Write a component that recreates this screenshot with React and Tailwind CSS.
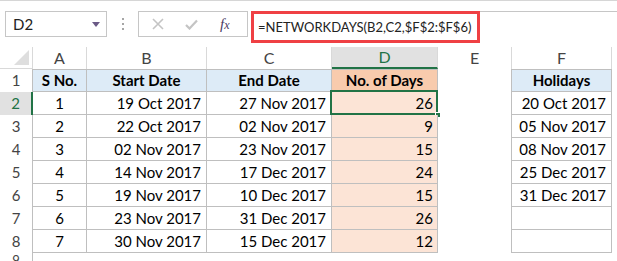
const rows = [
  ['1', '19 Oct 2017', '27 Nov 2017', '26', '20 Oct 2017'],
  ['2', '22 Oct 2017', '02 Nov 2017', '9', '05 Nov 2017'],
  ['3', '02 Nov 2017', '23 Nov 2017', '15', '08 Nov 2017'],
  ['4', '14 Nov 2017', '17 Dec 2017', '24', '25 Dec 2017'],
  ['5', '19 Nov 2017', '10 Dec 2017', '15', '31 Dec 2017'],
  ['6', '23 Nov 2017', '31 Dec 2017', '26', ''],
  ['7', '30 Nov 2017', '15 Dec 2017', '12', ''],
];

const cols = ['A', 'B', 'C', 'D', 'E', 'F'];

function FormulaBar() {
  return (
    <div className="h-[47px] border-t border-[#d6d6d6] flex items-start pt-[10px] relative">
      {/* Name box */}
      <div className="ml-[5px] w-[102px] h-[26px] border border-[#c6c6c6] flex items-center justify-between pl-[7px] pr-[6px]">
        <span className="text-[15px] text-[#222]">D2</span>
        <span className="w-0 h-0 border-l-[4px] border-r-[4px] border-t-[5px] border-l-transparent border-r-transparent border-t-[#6b5a86]" />
      </div>
      {/* Dots */}
      <div className="w-[31px] h-[26px] flex flex-col items-center justify-center gap-[3px]">
        <span className="w-[2px] h-[2px] bg-[#a6a6a6]" />
        <span className="w-[2px] h-[2px] bg-[#a6a6a6]" />
        <span className="w-[2px] h-[2px] bg-[#a6a6a6]" />
      </div>
      {/* Cancel / enter / fx */}
      <div className="w-[110px] h-[26px] border border-[#c6c6c6] flex items-center pl-[13px]">
        <svg width="12" height="12" viewBox="0 0 12 12" className="mr-[21px]">
          <path d="M1 1L11 11M11 1L1 11" stroke="#c4c4c4" strokeWidth="1.6" />
        </svg>
        <svg width="13" height="11" viewBox="0 0 13 11" className="mr-[22px]">
          <path d="M1 6L4.5 9.5L12 1.5" stroke="#c4c4c4" strokeWidth="2.2" fill="none" />
        </svg>
        <span className="text-[15px] italic text-[#4b3c63] [font-family:'Liberation_Serif',serif]">
          f<span className="text-[12px]">x</span>
        </span>
      </div>
      {/* Formula */}
      <div className="ml-[4px] flex-1 h-[26px] border-t border-[#c6c6c6] relative">
        <div className="absolute left-[-1px] top-[-1px] w-[229px] h-[32px] border-[3px] border-[#ef4044] flex items-start pl-[4px] pt-[4px]">
          <span className="text-[13px] text-[#222] whitespace-nowrap">
            =NETWORKDAYS(B2,C2,$F$2:$F$6)
          </span>
        </div>
      </div>
    </div>
  );
}

function Grid() {
  const cell = 'h-[23px] flex items-center text-[15px] text-black';
  const tb = 'border-r border-b border-[#bfbfbf]';
  return (
    <div className="grid grid-cols-[33px_54px_120px_125px_106px_74px_100px_1fr] grid-rows-[22px_repeat(9,23px)]">
      {/* Column header row */}
      <div className="h-[22px] relative border-r border-b border-[#d9d9d9]">
        <svg width="15" height="15" viewBox="0 0 15 15" className="absolute right-[3px] bottom-[3px]">
          <path d="M15 0L15 15L0 15Z" fill="#dedede" />
        </svg>
      </div>
      {cols.map((c) => (
        <div
          key={c}
          className={
            c === 'D'
              ? 'h-[22px] flex items-center justify-center text-[16px] text-[#217346] bg-[#e1e1e1] border-r border-[#d9d9d9] border-b-2 border-b-[#217346]'
              : 'h-[22px] flex items-center justify-center text-[16px] text-[#444] border-r border-[#d9d9d9]'
          }
        >
          {c}
        </div>
      ))}
      <div />

      {/* Row 1 - headers */}
      <div className="h-[23px] flex items-center justify-center text-[15px] text-[#444] border-r border-[#bfbfbf]">1</div>
      <div className={`${cell} justify-center font-bold bg-[#ddebf7] ${tb} border-t`}>S No.</div>
      <div className={`${cell} justify-center font-bold bg-[#ddebf7] ${tb} border-t`}>Start Date</div>
      <div className={`${cell} justify-center font-bold bg-[#ddebf7] ${tb} border-t`}>End Date</div>
      <div className={`${cell} justify-center font-bold bg-[#f8cbad] ${tb} border-t`}>No. of Days</div>
      <div className="border-r border-[#bfbfbf]" />
      <div className={`${cell} justify-center font-bold bg-[#ddebf7] ${tb} border-t`}>Holidays</div>
      <div />

      {rows.map((r, i) => {
        const n = i + 2;
        const selected = n === 2;
        return [
          <div
            key={`h${n}`}
            className={
              selected
                ? 'h-[23px] flex items-center justify-center text-[15px] text-[#217346] bg-[#e1e1e1] border-r-2 border-[#217346]'
                : 'h-[23px] flex items-center justify-center text-[15px] text-[#444] border-r border-[#bfbfbf]'
            }
          >
            {n}
          </div>,
          <div key={`a${n}`} className={`${cell} justify-center ${tb}`}>{r[0]}</div>,
          <div key={`b${n}`} className={`${cell} justify-end pr-[5px] ${tb}`}>{r[1]}</div>,
          <div key={`c${n}`} className={`${cell} justify-end pr-[5px] ${tb}`}>{r[2]}</div>,
          <div key={`d${n}`} className={`${cell} justify-end pr-[4px] bg-[#fce4d6] ${tb} relative`}>
            {r[3]}
            {selected && (
              <>
                <span className="absolute left-[-2px] top-[-2px] right-[-1px] bottom-[-1px] border-2 border-[#217346]" />
                <span className="absolute right-[-4px] bottom-[-4px] w-[6px] h-[6px] bg-[#217346] border border-white" />
              </>
            )}
          </div>,
          <div key={`e${n}`} className="border-r border-[#bfbfbf]" />,
          <div key={`f${n}`} className={`${cell} justify-end pr-[5px] ${tb}`}>{r[4]}</div>,
          <div key={`g${n}`} />,
        ];
      })}

      {/* Row 9 (cut off at the window edge) */}
      <div className="h-[23px] flex items-start justify-center text-[13px] leading-[13px] pt-[1px] text-[#444] border-r border-[#bfbfbf]">9</div>
    </div>
  );
}

export default function App() {
  return (
    <div className="w-[617px] h-[261px] overflow-hidden bg-white [font-family:Lato,'Open_Sans',sans-serif]">
      <FormulaBar />
      <Grid />
    </div>
  );
}
